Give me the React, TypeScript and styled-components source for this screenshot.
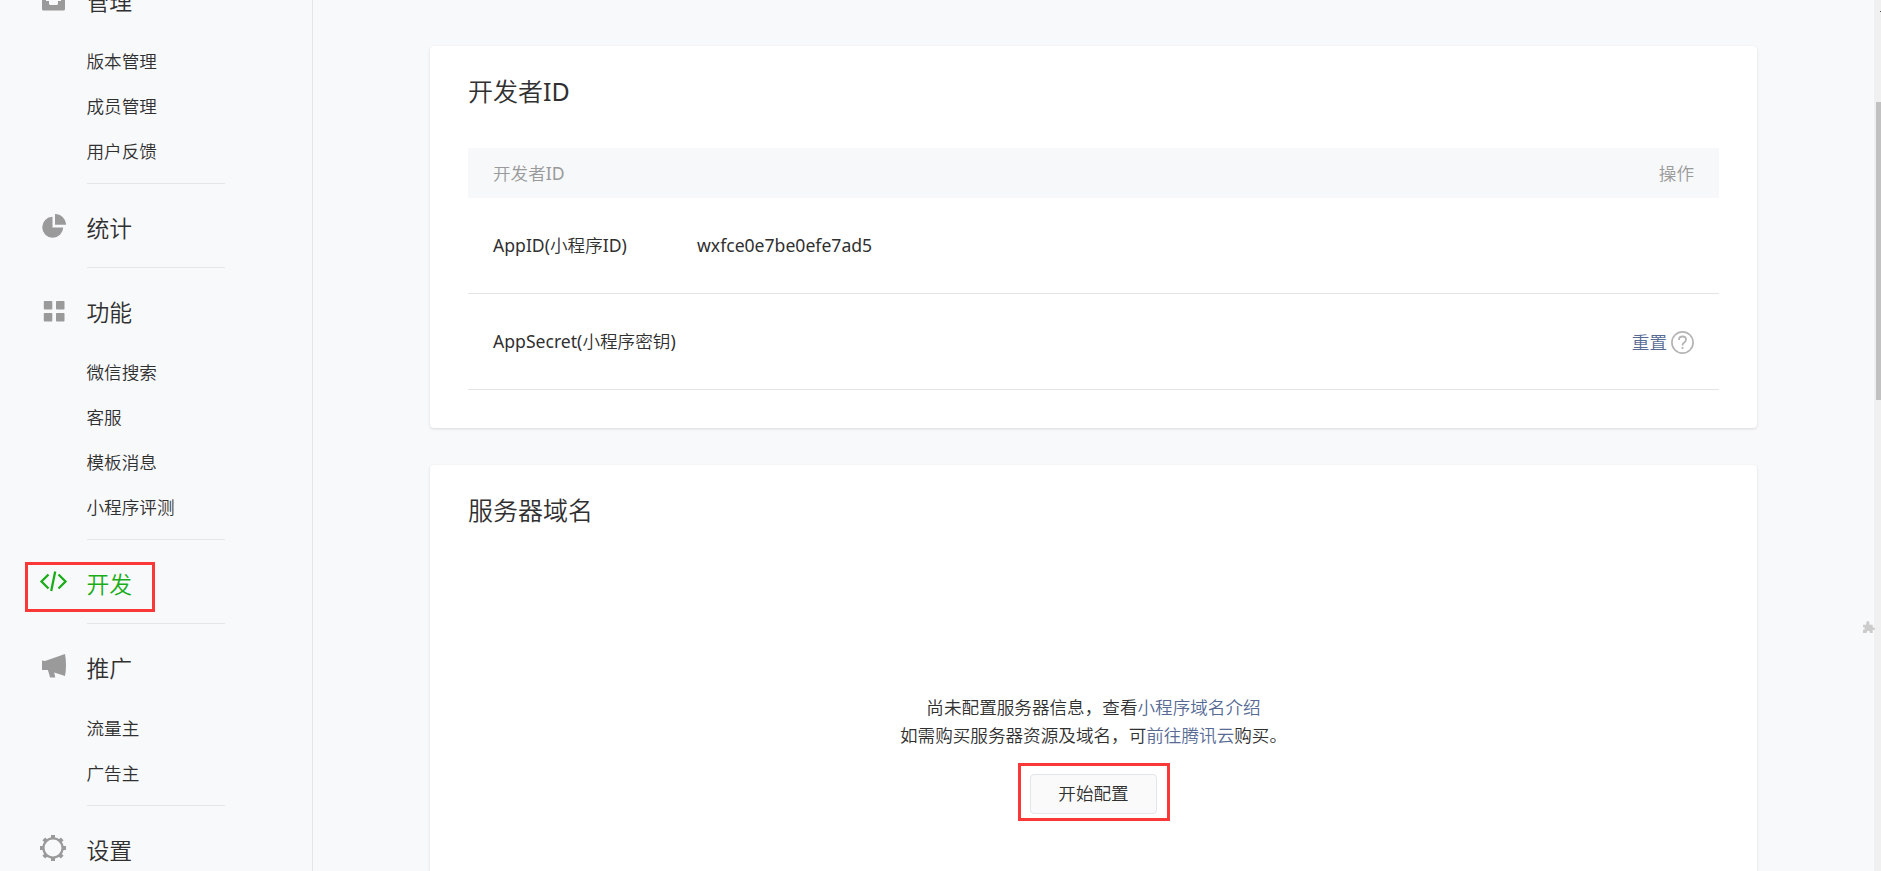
import React from 'react';
import styled, { createGlobalStyle } from 'styled-components';

const GlobalStyle = createGlobalStyle`
  * { box-sizing: border-box; }
  body {
    margin: 0;
    overflow: hidden;
    background: #f8f9fb;
    color: #303030;
    font: 350 17.6px/28px 'Noto Sans', 'Noto Sans CJK SC', sans-serif;
  }
`;

const Page = styled.div`
  display: flex;
  height: 871px;
  overflow: hidden;
`;

const Sidebar = styled.nav`
  flex: none;
  width: 313px;
  border-right: 1px solid #e4e6e8;
`;

const NavList = styled.div`
  margin-top: -43px;
`;

const Group = styled.section`
  position: relative;
  width: 225px;
  padding: 14px 0 9px;
  &::after {
    content: '';
    display: block;
    height: 1px;
    margin: 9px 0 -9px 87px;
    background: #e4e6e8;
  }
`;

const GroupTitle = styled.div<{ $active?: boolean }>`
  display: flex;
  align-items: center;
  height: 60px;
  padding-left: 38px;
  font-size: 22.8px;
  color: ${(p) => (p.$active ? '#1aad19' : '#303030')};
`;

const GroupName = styled.span`
  margin-top: 2px;
`;

const NavIcon = styled.svg<{ $active?: boolean }>`
  width: 30px;
  height: 30px;
  margin: 0 18.500px 4px 0;
  color: ${(p) => (p.$active ? '#1aad19' : '#9a9a9a')};
`;

const SubList = styled.div`
  padding: 8px 0 0 86.500px;
`;

const SubItem = styled.div`
  height: 45px;
  line-height: 45px;
`;

const Highlight = styled.div<{ $x: number; $y: number; $w: number; $h: number }>`
  position: absolute;
  left: ${(p) => p.$x}px;
  top: ${(p) => p.$y}px;
  width: ${(p) => p.$w}px;
  height: ${(p) => p.$h}px;
  border: 3px solid #fb3838;
`;

const Main = styled.main`
  flex: 1;
  display: flex;
  flex-direction: column;
  gap: 37px;
  padding: 46px 117px 0;
`;

const Card = styled.section<{ $height: number }>`
  flex: none;
  height: ${(p) => p.$height}px;
  padding: 25px 38px 0;
  background: #fff;
  border-radius: 4px;
  box-shadow: 0 1px 3px rgba(0, 0, 0, 0.13);
`;

const CardTitle = styled.h2`
  margin: 0;
  font-size: 25px;
  font-weight: 350;
  line-height: 40px;
`;

const Table = styled.div`
  margin-top: 37px;
`;

const Latin = styled.span`
  font-weight: 400;
`;

const HeadRow = styled.div`
  display: flex;
  justify-content: space-between;
  height: 50px;
  padding: 0 25px;
  line-height: 50px;
  color: #9a9a9a;
  background: #f6f8f9;
`;

const Row = styled.div`
  display: flex;
  align-items: center;
  height: 96px;
  padding: 0 25px;
  border-bottom: 1px solid #e4e5e7;
`;

const Name = styled.div`
  width: 204px;
  padding-bottom: 2px;
  white-space: nowrap;
`;

const Value = styled.div`
  flex: 1;
  padding-bottom: 2px;
`;

const Actions = styled.div`
  display: flex;
  align-items: center;
  gap: 4px;
`;

const HelpIcon = styled.svg`
  margin-top: 2px;
`;

const Link = styled.a`
  color: #576b95;
`;

const Empty = styled.div`
  position: relative;
  display: flex;
  flex-direction: column;
  align-items: center;
  padding-top: 163px;
`;

const Button = styled.button`
  width: 127px;
  height: 40px;
  margin-top: 25px;
  padding-bottom: 3px;
  border: 1px solid #e1e6eb;
  border-radius: 4px;
  background: #fafafa;
  color: #303030;
  font: inherit;
`;

const ButtonMark = styled.div`
  position: absolute;
  left: 50%;
  bottom: -7px;
  width: 152px;
  height: 58px;
  margin-left: -76px;
  border: 3px solid #fb3838;
`;

const Scrollbar = styled.div`
  position: relative;
  flex: none;
  width: 7px;
  padding: 102px 0 0 2px;
  background: #f0f0f0;
`;

const Thumb = styled.div`
  height: 298px;
  background: #c1c1c1;
`;

const Tick = styled.div`
  position: absolute;
  right: 0;
  top: 11px;
  width: 1px;
  height: 1px;
  background: #505050;
`;

const Puzzle = styled.svg`
  position: absolute;
  left: -11px;
  top: 621px;
  width: 12px;
  height: 12px;
`;

const icons: Record<string, React.ReactNode> = {
  inbox: (
    <path fill="currentColor" fillRule="evenodd" d="M6 3h19a2 2 0 0 1 2 2v20a1.500 1.500 0 0 1-1.500 1.500h-20A1.500 1.500 0 0 1 4 25V5a2 2 0 0 1 2-2zm2 4v10h3v2.500q0 1.500 1.500 1.500h6q1.500 0 1.500-1.500V17h3V7z" />
  ),
  pie: (
    <g fill="currentColor">
      <path d="M14.500 5.800A10.500 10.500 0 1 0 25.200 16.500H14.500z" />
      <path d="M17 3v10.800h11A11 11 0 0 0 17 3z" />
    </g>
  ),
  grid: (
    <g fill="currentColor">
      <rect x="5.800" y="6" width="8.500" height="8.500" rx="0.800" />
      <rect x="18" y="6" width="8.500" height="8.500" rx="0.800" />
      <rect x="5.800" y="18" width="8.500" height="8.500" rx="0.800" />
      <rect x="18" y="18" width="8.500" height="8.500" rx="0.800" />
    </g>
  ),
  code: (
    <g fill="none" stroke="currentColor" strokeWidth="2.300">
      <path d="M10.500 7.500L3.500 14.500l7 7M20.500 7.500l7 7-7 7M17.200 4.500L13.200 24" />
    </g>
  ),
  horn: (
    <path fill="currentColor" d="M4 9.500l3 .4L27 3q1 5 1 11t-1 11l-10.800-3.600 1.100 5.100h-5.200l-2.200-7.600H4z" />
  ),
  gear: (
    <g fill="none" stroke="currentColor">
      <circle cx="15" cy="15" r="9.600" strokeWidth="2.300" />
      <path strokeWidth="4" d="M15 2v4M15 24v4M2 15h4M24 15h4M5.800 5.800l2.500 2.500M21.700 21.700l2.500 2.500M5.800 24.200l2.500-2.500M21.700 8.300l2.500-2.500" />
    </g>
  ),
};

const groups = [
  { icon: 'inbox', title: '管理', items: ['版本管理', '成员管理', '用户反馈'] },
  { icon: 'pie', title: '统计', items: [] },
  { icon: 'grid', title: '功能', items: ['微信搜索', '客服', '模板消息', '小程序评测'] },
  { icon: 'code', title: '开发', items: [], active: true },
  { icon: 'horn', title: '推广', items: ['流量主', '广告主'] },
  { icon: 'gear', title: '设置', items: [] },
];

export default function App() {
  return (
    <Page>
      <GlobalStyle />
      <Sidebar>
        <NavList>
          {groups.map((g) => (
            <Group key={g.title}>
              <GroupTitle $active={g.active}>
                <NavIcon viewBox="0 0 30 30" $active={g.active}>{icons[g.icon]}</NavIcon>
                <GroupName>{g.title}</GroupName>
              </GroupTitle>
              {g.items.length > 0 && (
                <SubList>
                  {g.items.map((item) => <SubItem key={item}>{item}</SubItem>)}
                </SubList>
              )}
              {g.active && <Highlight $x={25} $y={22} $w={130} $h={50} />}
            </Group>
          ))}
        </NavList>
      </Sidebar>
      <Main>
        <Card $height={382}>
          <CardTitle>开发者<Latin>ID</Latin></CardTitle>
          <Table>
            <HeadRow><span>开发者<Latin>ID</Latin></span><span>操作</span></HeadRow>
            <Row>
              <Name><Latin>AppID(</Latin>小程序<Latin>ID)</Latin></Name>
              <Value><Latin>wxfce0e7be0efe7ad5</Latin></Value>
            </Row>
            <Row>
              <Name><Latin>AppSecret(</Latin>小程序密钥<Latin>)</Latin></Name>
              <Value />
              <Actions>
                <Link>重置</Link>
                <HelpIcon width="23" height="23" viewBox="0 0 23 23" fill="none" stroke="#b4b4b4">
                  <circle cx="11.500" cy="11.500" r="10.600" strokeWidth="1.700" />
                  <path strokeWidth="1.800" d="M8 9q0-3.500 3.500-3.500T15 8.800q0 1.500-1.800 2.700-1.700 1-1.700 3M11.500 16v2" />
                </HelpIcon>
              </Actions>
            </Row>
          </Table>
        </Card>
        <Card $height={500}>
          <CardTitle>服务器域名</CardTitle>
          <Empty>
            <div>尚未配置服务器信息，查看<Link>小程序域名介绍</Link></div>
            <div>如需购买服务器资源及域名，可<Link>前往腾讯云</Link>购买。</div>
            <Button>开始配置</Button>
            <ButtonMark />
          </Empty>
        </Card>
      </Main>
      <Scrollbar>
        <Tick />
        <Thumb />
        <Puzzle viewBox="0 0 13 13">
          <path fill="#cccccc" d="M0 4h3.500V2.500Q3.500 0 5.300 0T7 2.500V4h3.500v3h1q1.500 0 1.500 1.300T11.500 9.800h-1V13H7.500q.2-2.400-1.700-2.400T4 13H0V9.500q2 0 2-1.500T0 6.800z" />
        </Puzzle>
      </Scrollbar>
    </Page>
  );
}
